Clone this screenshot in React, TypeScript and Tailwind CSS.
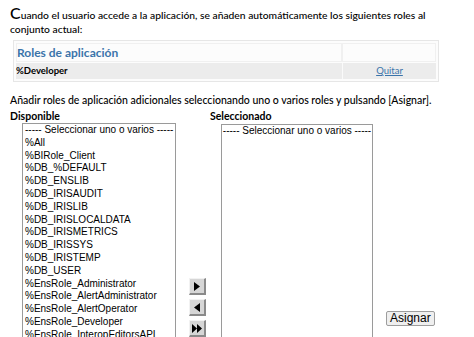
import React from "react";

const futura = { fontFamily: "Lato, 'Open Sans', sans-serif" };
const arial = { fontFamily: "'Liberation Sans', Arial, sans-serif" };

const available = [
  "----- Seleccionar uno o varios -----",
  "%All",
  "%BIRole_Client",
  "%DB_%DEFAULT",
  "%DB_ENSLIB",
  "%DB_IRISAUDIT",
  "%DB_IRISLIB",
  "%DB_IRISLOCALDATA",
  "%DB_IRISMETRICS",
  "%DB_IRISSYS",
  "%DB_IRISTEMP",
  "%DB_USER",
  "%EnsRole_Administrator",
  "%EnsRole_AlertAdministrator",
  "%EnsRole_AlertOperator",
  "%EnsRole_Developer",
  "%EnsRole_InteropEditorsAPI",
  "%EnsRole_Monitor",
  "%EnsRole_Operator",
];

const MoveButton = ({ children }: { children: React.ReactNode }) => (
  <div className="w-[17px] h-[17px] flex items-center justify-center bg-[#d6d6d6] border-t border-l border-t-[#f2f2f2] border-l-[#f2f2f2] border-b-2 border-r-2 border-b-[#8a8a8a] border-r-[#8a8a8a]">
    {children}
  </div>
);

const App = () => {
  return (
    <div className="w-[474px] h-[337px] overflow-hidden bg-white text-black" style={futura}>
      {/* INTRO */}
      <p className="pl-[10px] pt-[6px] pr-[10px] text-[10.3px] leading-[14px] font-medium">
        <span className="text-[16px] leading-[14px]">C</span>uando el usuario accede a la aplicación, se añaden automáticamente los siguientes roles al conjunto actual:
      </p>

      {/* ROLES TABLE */}
      <div className="ml-[13px] mt-[4px] w-[426px] border border-[#e6e6e6] bg-[#fcfcfc] p-[2px]">
        <div className="flex h-[19px] items-center">
          <div className="w-[326px] h-full flex items-center border border-[#f0f0f0] text-[12px] font-bold text-[#3b74aa]">
            Roles de aplicación
          </div>
          <div className="flex-1 h-full border border-[#f0f0f0]"></div>
        </div>
        <div className="flex h-[16px] mt-[1px] bg-[#ececec]">
          <div className="w-[326px] flex items-center font-bold text-[9.5px]">%Developer</div>
          <div className="flex-1 flex items-center justify-center border-l border-[#fafafa]">
            <a href="#" className="text-[#3b74aa] underline text-[9.5px]">Quitar</a>
          </div>
        </div>
      </div>

      {/* ADD ROLES */}
      <p className="pl-[10px] mt-[11px] text-[10.5px] leading-[14px] font-medium">
        Añadir roles de aplicación adicionales seleccionando uno o varios roles y pulsando [Asignar].
      </p>

      <div className="flex mt-[3px]">
        <div className="w-[200px] pl-[10px]">
          <div className="text-[10.5px] font-bold leading-[12px]">Disponible</div>
          <div
            className="ml-[12px] mt-[1px] w-[154px] h-[380px] border border-[#9a9a9a] pl-[2px] text-[10px] leading-[12.8px]"
            style={arial}
          >
            {available.map((r) => (
              <div key={r} className="whitespace-nowrap">{r}</div>
            ))}
          </div>
        </div>

        <div className="flex flex-col">
          <div className="pl-[10px] text-[10.5px] font-bold leading-[12px]">Seleccionado</div>
          <div className="flex">
            <div className="flex flex-col gap-[4px] mt-[156px] -ml-[11px] mr-[15px]">
              <MoveButton>
                <svg width="8" height="9" viewBox="0 0 8 9"><path d="M1 0 L7 4.5 L1 9 Z" fill="#000" /></svg>
              </MoveButton>
              <MoveButton>
                <svg width="8" height="9" viewBox="0 0 8 9"><path d="M7 0 L1 4.5 L7 9 Z" fill="#000" /></svg>
              </MoveButton>
              <MoveButton>
                <svg width="11" height="9" viewBox="0 0 11 9"><path d="M0 0 L5 4.5 L0 9 Z M5 0 L10 4.5 L5 9 Z" fill="#000" /></svg>
              </MoveButton>
            </div>
            <div
              className="mt-[2px] w-[152px] h-[380px] border border-[#9a9a9a] text-[10px] leading-[12.8px] text-center"
              style={arial}
            >
              ----- Seleccionar uno o varios -----
            </div>
            <div className="ml-[13px] mt-[182px]">
              <button
                className="h-[15px] px-[3px] bg-[#efefef] border border-[#9d9d9d] rounded-[2px] text-[12px] leading-[12px]"
                style={arial}
              >
                Asignar
              </button>
            </div>
          </div>
        </div>
      </div>
    </div>
  );
};

export default App;
